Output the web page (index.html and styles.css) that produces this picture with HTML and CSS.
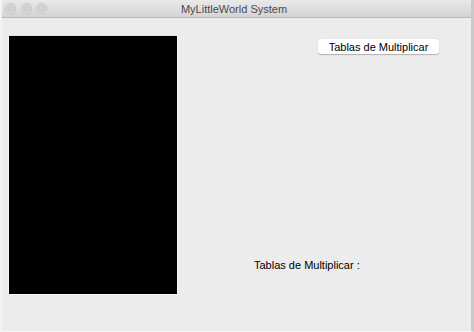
FILE: index.html
```html
<!DOCTYPE html>
<html lang="es">
<head>
    <meta charset="UTF-8">
    <title>MyLittleWorld System</title>
    <link rel="stylesheet" href="styles.css">
</head>
<body>

<div class="window">
    <div class="titlebar">
        <div class="lights">
            <span class="light"></span>
            <span class="light"></span>
            <span class="light"></span>
        </div>
        <div class="title">MyLittleWorld System</div>
    </div>

    <div class="content">
        <div class="canvas"></div>

        <div class="side">
            <button class="btn">Tablas de Multiplicar</button>
            <div class="result">Tablas de Multiplicar :</div>
        </div>
    </div>
</div>

</body>
</html>
```

FILE: styles.css
```css
/* Global Styles */
body {
    margin: 0;
    background-color: #ececec;
    font-family: 'Liberation Sans', Arial, sans-serif;
    color: #000000;
}

.window {
    height: 332px;
    box-sizing: border-box;
    border-left: 2px solid #f3f3f3;
    border-right: 3px solid #c9c9c9;
    border-bottom: 1px solid #f6f6f6;
    display: flex;
    flex-direction: column;
}

/* Title Bar */
.titlebar {
    position: relative;
    height: 17px;
    background: linear-gradient(#e9e9e9, #d4d4d4);
    border-bottom: 1px solid #b9b9b9;
    display: flex;
    justify-content: center;
    align-items: center;
}

.lights {
    position: absolute;
    left: 3px;
    top: 3px;
    display: flex;
    gap: 4.5px;
}

.light {
    width: 9px;
    height: 9px;
    border-radius: 50%;
    background-color: #d6d6d6;
    border: 1px solid #c4c4c4;
    box-shadow: inset 0 0 0 1.5px #dcdcdc, inset 0 0 0 2.5px #c8c8c8;
}

.title {
    font-size: 11px;
    color: #4a4a4a;
    margin-right: 5px;
}

/* Content */
.content {
    flex: 1;
    display: flex;
    padding: 17px 32px 0 6px;
}

.canvas {
    width: 168px;
    height: 258px;
    background-color: #000000;
    border: 1px solid #f7f7f7;
    border-top-color: #dcdcdc;
}

.side {
    flex: 1;
    display: flex;
    flex-direction: column;
}

.btn {
    align-self: flex-end;
    width: 121px;
    height: 15px;
    margin-top: 4px;
    padding: 0;
    background-color: #ffffff;
    border: none;
    border-radius: 3px;
    box-shadow: 0 0.5px 1px rgba(0, 0, 0, 0.25);
    font-family: 'Liberation Sans', Arial, sans-serif;
    font-size: 11px;
    color: #000000;
}

.result {
    margin-top: 204px;
    margin-left: 76px;
    font-size: 11px;
    line-height: 15px;
}
```
